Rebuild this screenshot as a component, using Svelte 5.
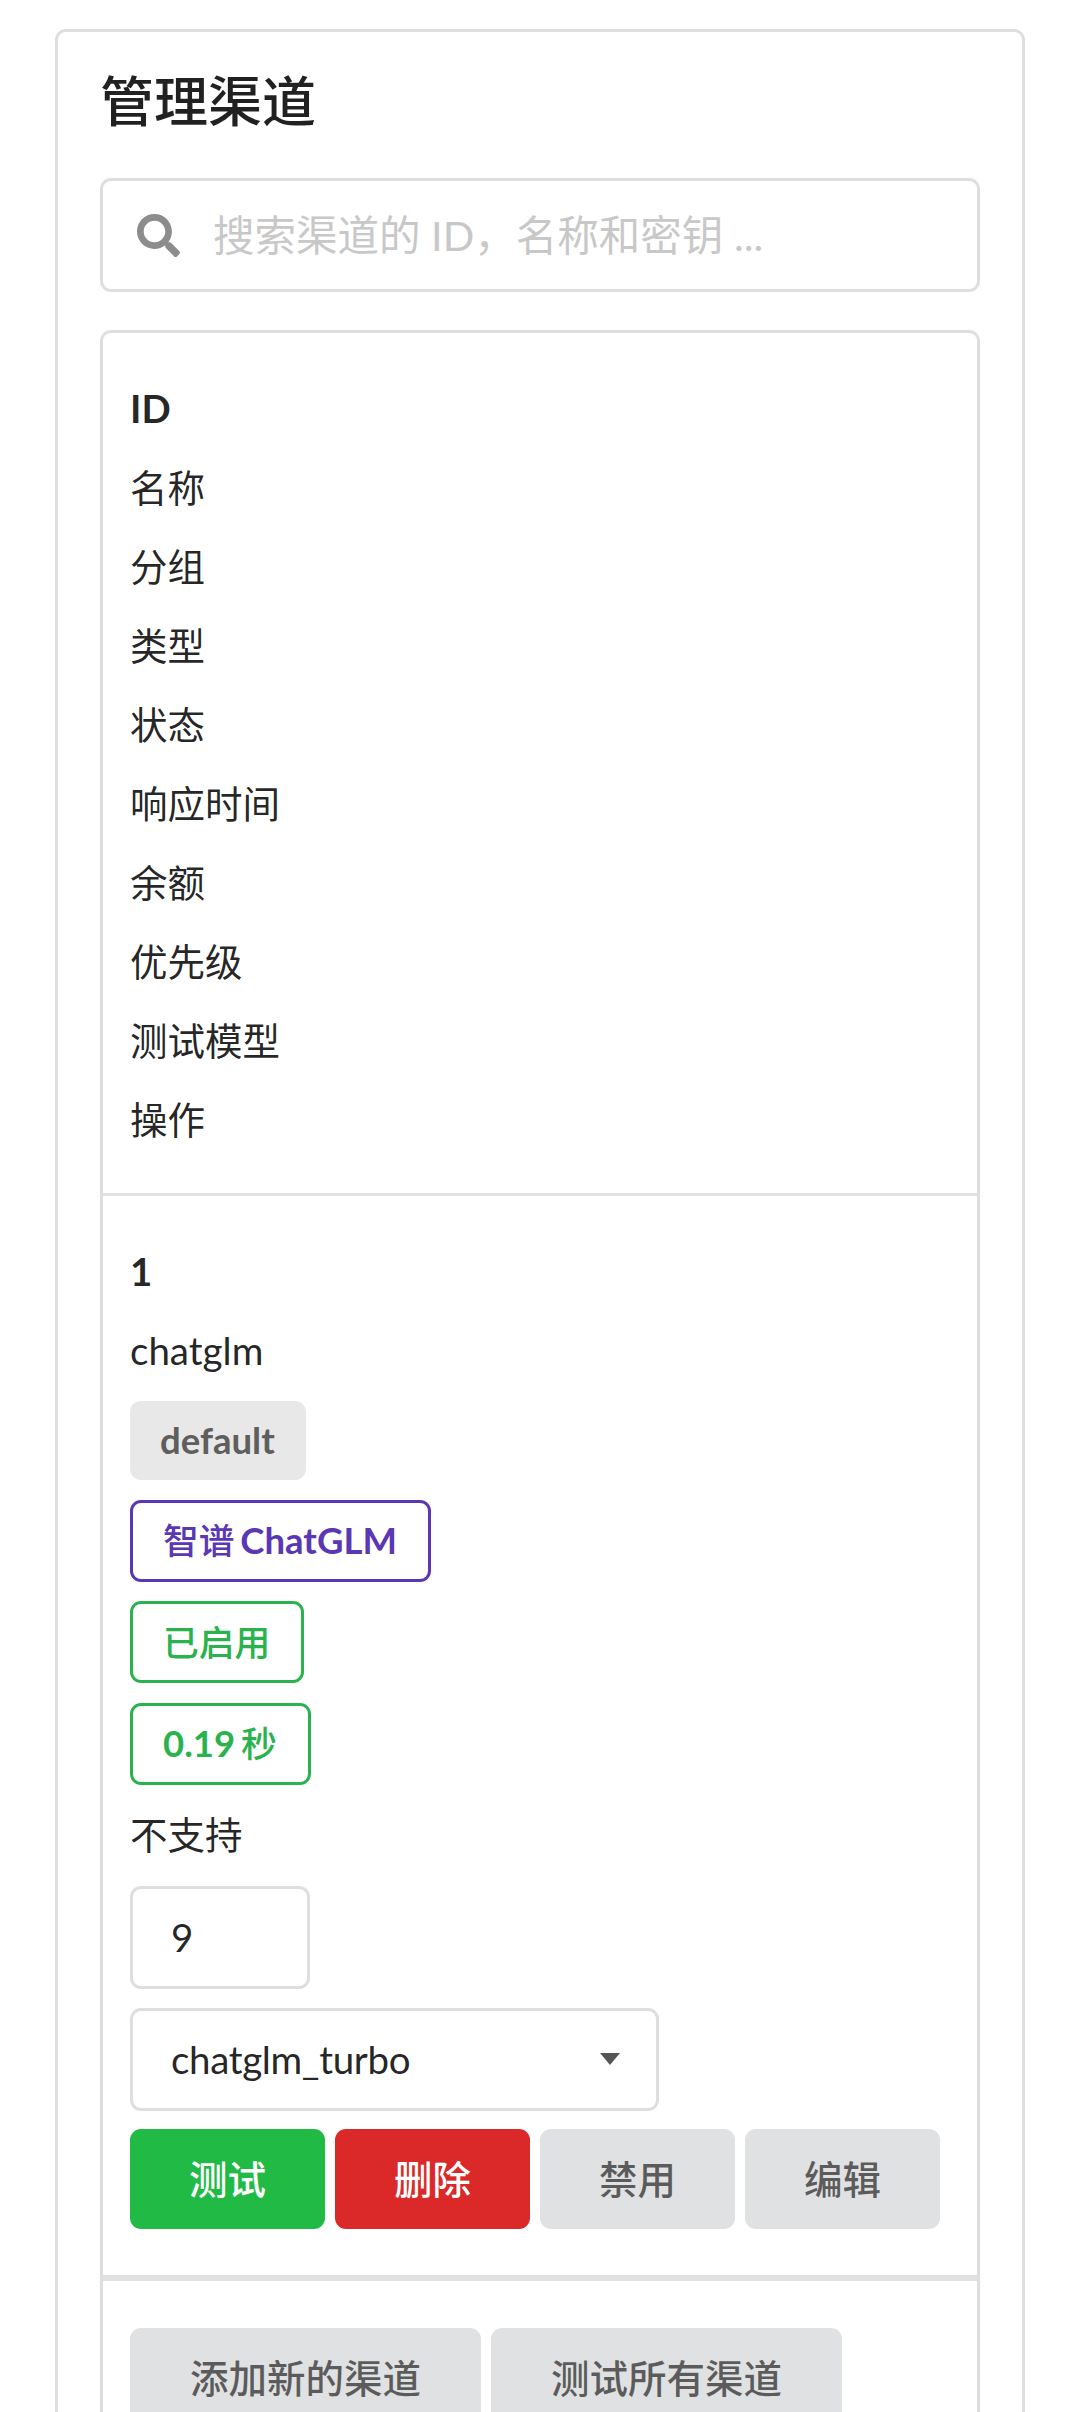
<script>
	const headers = ['ID', '名称', '分组', '类型', '状态', '响应时间', '余额', '优先级', '测试模型', '操作'];
</script>

<div class="page">
	<section class="card">
		<h3>管理渠道</h3>
		<div class="search">
			<svg class="search-icon" viewBox="0 0 512 512" aria-hidden="true">
				<path d="M505 442.7L405.3 343c-4.5-4.5-10.6-7-17-7H372c27.6-35.3 44-79.7 44-128C416 93.1 322.9 0 208 0S0 93.1 0 208s93.1 208 208 208c48.3 0 92.7-16.4 128-44v16.3c0 6.4 2.5 12.5 7 17l99.7 99.7c9.4 9.4 24.6 9.4 33.9 0l28.3-28.3c9.4-9.4 9.4-24.6.1-34zM208 336c-70.7 0-128-57.2-128-128 0-70.7 57.2-128 128-128 70.7 0 128 57.2 128 128 0 70.7-57.2 128-128 128z" />
			</svg>
			<input type="text" placeholder="搜索渠道的 ID，名称和密钥 ..." />
		</div>

		<div class="table">
			<div class="head">
				{#each headers as h, i}
					<div class="cell" class:first={i === 0} class:zh={i > 0}>{h}</div>
				{/each}
			</div>

			<div class="row">
				<div class="cell first">1</div>
				<div class="cell">chatglm</div>
				<span class="label grey">default</span>
				<span class="label basic violet"><span class="cjk">智谱</span>&nbsp;ChatGLM</span>
				<span class="label basic green"><span class="cjk">已启用</span></span>
				<span class="label basic green">0.19&nbsp;<span class="cjk">秒</span></span>
				<div class="cell zh unsupported">不支持</div>
				<div class="field priority">9</div>
				<div class="field select">
					<span class="model">chatglm_turbo</span>
					<i class="caret"></i>
				</div>
				<div class="actions">
					<button class="btn test">测试</button>
					<button class="btn del">删除</button>
					<button class="btn">禁用</button>
					<button class="btn">编辑</button>
				</div>
			</div>

			<div class="foot">
				<button class="btn wide">添加新的渠道</button>
				<button class="btn wide">测试所有渠道</button>
			</div>
		</div>
	</section>
</div>

<style>
	:global(html),
	:global(body) {
		margin: 0;
		background: #fff;
	}

	.page {
		box-sizing: border-box;
		height: 2412px;
		overflow: hidden;
		padding: 29px 55px 0;
		font-family: Lato, 'Noto Sans CJK SC', sans-serif;
		font-size: 38.5px;
		line-height: 55px;
		color: rgba(0, 0, 0, 0.87);
	}

	.card {
		box-sizing: border-box;
		min-height: 2500px;
		padding: 0 42px;
		border: 3px solid #dedede;
		border-radius: 11px;
		background: #fff;
	}

	h3 {
		margin: 0;
		padding: 36px 0 43px;
		font-size: 54px;
		line-height: 67px;
		font-weight: 500;
	}

	.search {
		box-sizing: border-box;
		display: flex;
		align-items: center;
		height: 114px;
		padding: 0 0 0 34px;
		border: 3px solid #dedede;
		border-radius: 11px;
	}

	.search-icon {
		flex: none;
		width: 43px;
		height: 43px;
		fill: #8c8c8c;
	}

	.search input {
		flex: 1;
		min-width: 0;
		margin-left: 33px;
		padding: 0;
		border: 0;
		outline: 0;
		font: inherit;
		font-size: 41.5px;
		background: transparent;
	}

	.search input::placeholder {
		color: #c8c8c8;
		opacity: 1;
	}

	.table {
		margin-top: 38px;
		border: 3px solid #dedede;
		border-radius: 11px 11px 0 0;
		border-bottom: 0;
	}

	.head {
		padding: 36px 27px 34px;
		border-bottom: 3px solid #e2e2e2;
	}

	.cell {
		padding: 12px 0;
	}

	.zh {
		font-size: 37.5px;
	}

	.first {
		font-weight: 700;
	}

	.row {
		display: flex;
		flex-direction: column;
		align-items: flex-start;
		padding: 36px 27px 46px;
		border-bottom: 6px solid #e2e2e2;
	}

	.label {
		box-sizing: border-box;
		display: inline-flex;
		align-items: center;
		height: 82px;
		margin-top: 19.5px;
		padding: 0 31px 0 30px;
		border-radius: 11px;
		font-size: 36.5px;
		font-weight: 700;
		white-space: nowrap;
		word-spacing: -3px;
	}

	.cjk {
		font-size: 35.75px;
		font-weight: 500;
	}

	.grey {
		height: 79px;
		margin-top: 11px;
		background: #e8e8e8;
		color: #5e5e5e;
	}

	.basic {
		background: #fff;
		border: 3px solid currentColor;
	}

	.violet {
		color: #5a37b3;
	}

	.green {
		color: #2ab24e;
	}

	.unsupported {
		margin-top: 10.5px;
	}

	.field {
		box-sizing: border-box;
		display: flex;
		align-items: center;
		height: 103px;
		border: 3px solid #dedede;
		border-radius: 11px;
		padding: 0 38px;
	}

	.priority {
		width: 180px;
		margin-top: 12px;
	}

	.select {
		justify-content: space-between;
		width: 529px;
		margin-top: 18.5px;
		padding-right: 36px;
	}

	.model {
		letter-spacing: -0.35px;
	}

	.caret {
		width: 0;
		height: 0;
		border-left: 10px solid transparent;
		border-right: 10px solid transparent;
		border-top: 12px solid #555;
	}

	.actions {
		display: flex;
		gap: 10px;
		margin-top: 18.5px;
	}

	.btn {
		flex: none;
		width: 195px;
		height: 100px;
		padding: 0;
		border: 0;
		border-radius: 11px;
		background: #e0e1e2;
		color: rgba(0, 0, 0, 0.6);
		font: inherit;
		font-weight: 500;
	}

	.test {
		background: #21ba45;
		color: #fff;
	}

	.del {
		background: #db2828;
		color: #fff;
	}

	.foot {
		display: flex;
		gap: 10px;
		padding: 47px 27px 0;
	}

	.wide {
		width: 351px;
	}
</style>
